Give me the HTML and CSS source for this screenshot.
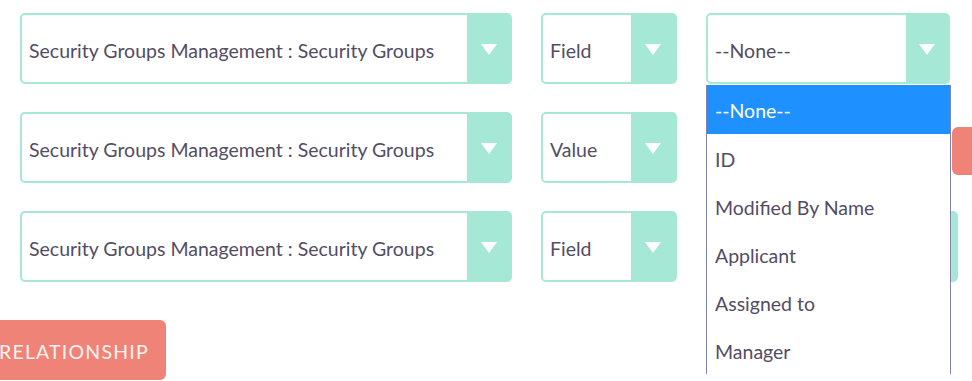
FILE: index.html
```html
<!DOCTYPE html>
<html>
<head>
<meta charset="utf-8">
<link rel="stylesheet" href="styles.css">
</head>
<body>
<div class="page">
  <div class="rows">
    <div class="row">
      <div class="select wide"><span class="label">Security Groups Management : Security Groups</span><span class="arrow"></span></div>
      <div class="select small"><span class="label">Field</span><span class="arrow"></span></div>
      <div class="select mid open-anchor"><span class="label">--None--</span><span class="arrow"></span>
        <div class="listbox">
          <div class="opt selected">--None--</div>
          <div class="opt">ID</div>
          <div class="opt">Modified By Name</div>
          <div class="opt">Applicant</div>
          <div class="opt">Assigned to</div>
          <div class="opt">Manager</div>
        </div>
      </div>
    </div>
    <div class="row">
      <div class="select wide"><span class="label">Security Groups Management : Security Groups</span><span class="arrow"></span></div>
      <div class="select small"><span class="label">Value</span><span class="arrow"></span></div>
      <div class="value-slot"><span class="red-btn"></span></div>
    </div>
    <div class="row">
      <div class="select wide"><span class="label">Security Groups Management : Security Groups</span><span class="arrow"></span></div>
      <div class="select small"><span class="label">Field</span><span class="arrow"></span></div>
      <div class="select mid longer"><span class="label"></span><span class="arrow"></span></div>
    </div>
  </div>
  <div class="actions">
    <button class="add-btn">RELATIONSHIP</button>
  </div>
</div>
</body>
</html>
```

FILE: styles.css
```css
html, body {
  margin: 0;
  padding: 0;
  background: #ffffff;
  overflow: hidden;
}
body {
  width: 972px;
  height: 381px;
  font-family: Lato, "Open Sans", sans-serif;
  color: #534d64;
}
.page {
  padding-top: 13px;
}
.rows {
  display: flex;
  flex-direction: column;
  gap: 28px;
  padding-left: 20px;
}
.row {
  display: flex;
  gap: 29px;
  height: 71px;
}
.select {
  position: relative;
  box-sizing: border-box;
  height: 71px;
  border: 2px solid #a5e8d6;
  border-radius: 5px;
  background: #ffffff;
  display: flex;
  align-items: center;
}
.select .label {
  flex: 1;
  padding-left: 7px;
  padding-top: 4px;
  font-size: 19.5px;
  white-space: nowrap;
  overflow: hidden;
}
.select .arrow {
  align-self: stretch;
  width: 42px;
  background: #a5e8d6;
  position: relative;
}
.select .arrow::after {
  content: "";
  position: absolute;
  left: 50%;
  top: 50%;
  margin-left: -8px;
  margin-top: -5px;
  border-left: 8px solid transparent;
  border-right: 8px solid transparent;
  border-top: 11px solid #ffffff;
}
.wide { width: 492px; }
.wide .arrow { width: 43px; }
.small { width: 136px; }
.small .arrow { width: 44px; }
.mid { width: 244px; }
.mid .arrow { width: 42px; }
.longer { width: 252px; }
.value-slot {
  width: 244px;
  position: relative;
}
.red-btn {
  position: absolute;
  left: 246px;
  top: 15px;
  width: 40px;
  height: 48px;
  border-radius: 6px;
  background: #f08377;
}
.listbox {
  position: absolute;
  left: -2px;
  top: 70px;
  width: 245px;
  height: 289px;
  box-sizing: border-box;
  border: 1px solid #7d83ad;
  border-bottom: none;
  border-top: none;
  background: #ffffff;
  overflow: hidden;
  z-index: 5;
}
.opt {
  height: 48px;
  line-height: 52px;
  padding-left: 8px;
  font-size: 19.5px;
  color: #534d64;
  white-space: nowrap;
  overflow: hidden;
}
.opt.selected {
  background: #1e90ff;
  color: #ffffff;
  height: 49px;
  line-height: 51px;
  margin-left: -1px;
  margin-right: -1px;
  padding-left: 9px;
}
.actions {
  margin-top: 38px;
}
.add-btn {
  display: block;
  margin-left: -30px;
  height: 60px;
  width: 196px;
  border: none;
  border-radius: 6px;
  background: #f08377;
  color: #fdf3f1;
  font-family: Lato, "Open Sans", sans-serif;
  font-size: 19.5px;
  letter-spacing: 1.2px;
  text-align: left;
  padding: 2px 0 0 29px;
  white-space: nowrap;
  overflow: hidden;
}
```
